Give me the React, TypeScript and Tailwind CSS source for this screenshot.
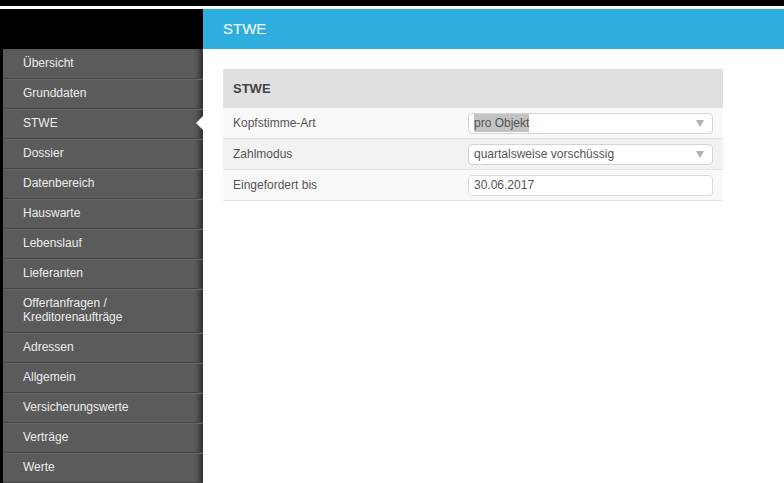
import React from 'react';

const navItems = [
  'Übersicht',
  'Grunddaten',
  'STWE',
  'Dossier',
  'Datenbereich',
  'Hauswarte',
  'Lebenslauf',
  'Lieferanten',
  'Offertanfragen / Kreditorenaufträge',
  'Adressen',
  'Allgemein',
  'Versicherungswerte',
  'Verträge',
  'Werte',
];

const Caret = () => (
  <svg width="8" height="7" viewBox="0 0 8 7" className="absolute right-[8px] top-[6px]">
    <path d="M0 0 H8 L4 7 Z" fill="#b0b0b0" />
  </svg>
);

export default function App() {
  return (
    <div
      className="min-h-screen bg-black flex flex-col"
      style={{ fontFamily: '"Liberation Sans", Arial, sans-serif' }}
    >
      <div className="h-[6px] bg-black" />
      <div className="h-[3px] bg-white" />

      <div className="flex flex-1">
        {/* Left column */}
        <div className="w-[203px] bg-black flex flex-col">
          <div className="h-[40px]" />
          <nav className="ml-[3px] flex-1 bg-[#5b5b5b] shadow-[inset_-7px_0_6px_-4px_rgba(0,0,0,0.55)]">
            {navItems.map((item) => {
              const active = item === 'STWE';
              const twoLine = item.startsWith('Offertanfragen');
              return (
                <div
                  key={item}
                  className={`relative border-b border-[#464646] shadow-[0_1px_0_#666] pl-[20px] pr-3 text-[12px] text-[#ececec] ${
                    twoLine ? 'h-[44px] pt-[7px] leading-[14px]' : 'h-[30px] leading-[29px]'
                  }`}
                >
                  {twoLine ? (
                    <>
                      Offertanfragen /<br />
                      Kreditorenaufträge
                    </>
                  ) : (
                    item
                  )}
                  {active && (
                    <span className="absolute right-0 top-[7px] w-0 h-0 border-y-[7px] border-y-transparent border-r-[7px] border-r-white" />
                  )}
                </div>
              );
            })}
          </nav>
        </div>

        {/* Main */}
        <div className="flex-1 bg-white flex flex-col">
          <div className="h-[40px] bg-[#2eaedf] flex items-center pl-[20px]">
            <span className="text-white text-[15px]">STWE</span>
          </div>

          <div className="pt-[20px] pl-[20px]">
            <div className="w-[500px]">
              <div className="h-[39px] bg-[#e0e0e0] flex items-center pl-[10px]">
                <span className="text-[13px] font-bold text-[#444]">STWE</span>
              </div>

              <div className="h-[31px] bg-[#f9f9f9] border-b border-[#e3e3e3] flex items-center">
                <div className="w-[245px] pl-[10px] text-[12px] text-[#555]">Kopfstimme-Art</div>
                <div className="relative w-[245px] h-[21px] bg-white border border-[#d4d4d4] rounded-[4px] pl-[5px] flex items-center">
                  <span className="text-[12px] text-[#555] bg-[#c3c3c3]">pro Objekt</span>
                  <Caret />
                </div>
              </div>

              <div className="h-[31px] bg-[#f2f2f2] border-b border-[#e3e3e3] flex items-center">
                <div className="w-[245px] pl-[10px] text-[12px] text-[#555]">Zahlmodus</div>
                <div className="relative w-[245px] h-[21px] bg-white border border-[#d4d4d4] rounded-[4px] pl-[5px] flex items-center">
                  <span className="text-[12px] text-[#555]">quartalsweise vorschüssig</span>
                  <Caret />
                </div>
              </div>

              <div className="h-[31px] bg-[#f9f9f9] border-b border-[#e3e3e3] flex items-center">
                <div className="w-[245px] pl-[10px] text-[12px] text-[#555]">Eingefordert bis</div>
                <div className="w-[245px] h-[21px] bg-white border border-[#dcdcdc] rounded-[4px] pl-[5px] flex items-center">
                  <span className="text-[12px] text-[#555]">30.06.2017</span>
                </div>
              </div>
            </div>
          </div>
        </div>
      </div>
    </div>
  );
}
